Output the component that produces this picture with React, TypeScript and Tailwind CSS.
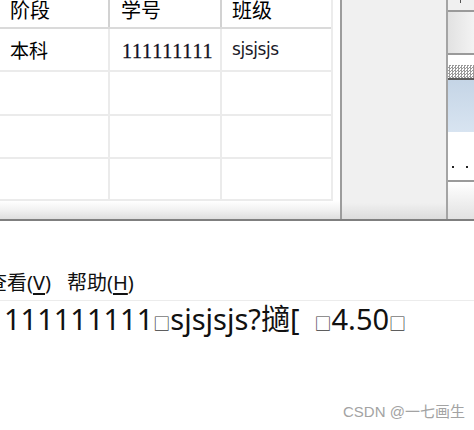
import React from "react";

const cjk = { fontFamily: '"Noto Sans CJK SC", "Noto Sans", sans-serif' };
const ui = { fontFamily: '"Noto Sans", "Noto Sans CJK SC", sans-serif' };

function Cell({ children, last, header, className = "" }: { children?: React.ReactNode; last?: boolean; header?: boolean; className?: string }) {
  return (
    <div
      className={
        "flex items-center pl-[10px] overflow-hidden " +
        (last ? "" : header ? "border-r-2 border-r-[#d2d2d2] " : "border-r-2 border-r-[#ebebeb] ") +
        className
      }
    >
      {children}
    </div>
  );
}

function Box() {
  return (
    <span className="text-[17px] align-[0px] text-[#3a3a3a]" style={cjk}>
      □
    </span>
  );
}

export default function App() {
  const rows = [43, 44, 43, 42];
  return (
    <div className="relative w-[474px] h-[430px] bg-white overflow-hidden text-black">
      {/* top window area */}
      <div className="flex h-[221px] border-b-2 border-b-[#7f7f7f]">
        {/* table column */}
        <div className="w-[340px] flex flex-col bg-[#f7f7f7]">
          <div className="flex">
            <div className="w-[333px] bg-white border-r-2 border-r-[#ececec]" style={cjk}>
              {/* header */}
              <div className="grid grid-cols-[110px_112px_109px] h-[29px] border-b-2 border-b-[#dadada] text-[20px]">
                <Cell header className="items-start -mt-[5px]">阶段</Cell>
                <Cell header className="items-start -mt-[5px] pl-[11px]">学号</Cell>
                <Cell last className="items-start -mt-[5px]">班级</Cell>
              </div>
              {rows.map((h, i) => (
                <div
                  key={i}
                  className="grid grid-cols-[110px_112px_109px] border-b-2 border-b-[#ebebeb]"
                  style={{ height: h }}
                >
                  {i === 0 ? (
                    <>
                      <Cell className="text-[19px] pt-[2px]">本科</Cell>
                      <Cell className="pl-[12px] pt-[2px]">
                        <span
                          className="text-[20px] text-[#111122] tracking-[0.8px]"
                          style={{ fontFamily: '"Liberation Serif", serif', WebkitTextStroke: "0.3px #111122" }}
                        >
                          111111111
                        </span>
                      </Cell>
                      <Cell last className="pl-[9px]">
                        <span className="text-[17px] text-[#1a1a28]" style={{ fontFamily: '"DejaVu Sans", sans-serif', letterSpacing: "-0.4px" }}>
                          sjsjsjs
                        </span>
                      </Cell>
                    </>
                  ) : (
                    <>
                      <Cell />
                      <Cell />
                      <Cell last />
                    </>
                  )}
                </div>
              ))}
            </div>
            <div className="flex-1 bg-white" />
          </div>
          <div className="flex-1 bg-gradient-to-b from-[#ffffff] via-[#f1f1f1] to-[#dedede]" />
        </div>
        {/* middle panel */}
        <div className="w-[2px] bg-[#9c9c9c]" />
        <div className="w-[104px] flex flex-col bg-[#f0f0f0]">
          <div className="flex-1" />
          <div className="h-[16px] bg-gradient-to-b from-[#f0f0f0] to-[#dcdcdc]" />
        </div>
        <div className="w-[2px] bg-[#a4a4a4]" />
        {/* right panel */}
        <div className="flex-1 flex flex-col bg-white">
          <div className="h-[10px] bg-[#f0f0f0] flex">
            <div className="ml-[12px] w-[1px] h-[3px] bg-[#555]" />
          </div>
          <div className="h-[2px] bg-[#9a9a9a]" />
          <div className="h-[41px] bg-gradient-to-r from-[#e2e2e2] to-[#f3f3f3]" />
          <div className="h-[2px] bg-[#9a9a9a]" />
          <div className="h-[10px] bg-white" />
          <div className="h-[13px] bg-[repeating-conic-gradient(#9a9a9a_0%_25%,#ffffff_0%_50%)] bg-[length:3px_3px]" />
          <div className="h-[2px] bg-[#5d5d5d]" />
          <div className="h-[52px] bg-gradient-to-b from-[#c5d5e6] to-[#d8e4f1]" />
          <div className="h-[34px] bg-white" />
          <div className="h-[2px] flex gap-[12px] pl-[4px] bg-white">
            <div className="w-[2px] h-[2px] bg-[#222]" />
            <div className="w-[2px] h-[2px] bg-[#222]" />
          </div>
          <div className="h-[12px] bg-white" />
          <div className="h-[2px] bg-[#9a9a9a]" />
          <div className="flex-1 bg-gradient-to-b from-[#ffffff] to-[#e2e2e2]" />
        </div>
      </div>

      {/* menu */}
      <div className="mt-[48px] flex gap-[16px] -ml-[13px] text-[20px] leading-[28px] text-[#111]" style={ui}>
        <span>
          查看(<u className="underline-offset-[3px]">V</u>)
        </span>
        <span>
          帮助(<u className="underline-offset-[3px]">H</u>)
        </span>
      </div>
      <div className="mt-[3px] border-t border-t-[#ececec]" />
      <div className="mt-[3px] pl-[4px] text-[29px] leading-[29px] whitespace-pre text-[#111]" style={ui}>
        111111111<Box />sjsjsjs?擿[  <Box />4.50<Box />
      </div>

      {/* watermark */}
      <div
        className="absolute left-[343px] top-[402px] text-[15px] leading-[20px] text-[#a3a3a3]"
        style={{ fontFamily: '"Liberation Sans", "Noto Sans CJK SC", sans-serif' }}
      >
        CSDN @一七画生
      </div>
    </div>
  );
}
